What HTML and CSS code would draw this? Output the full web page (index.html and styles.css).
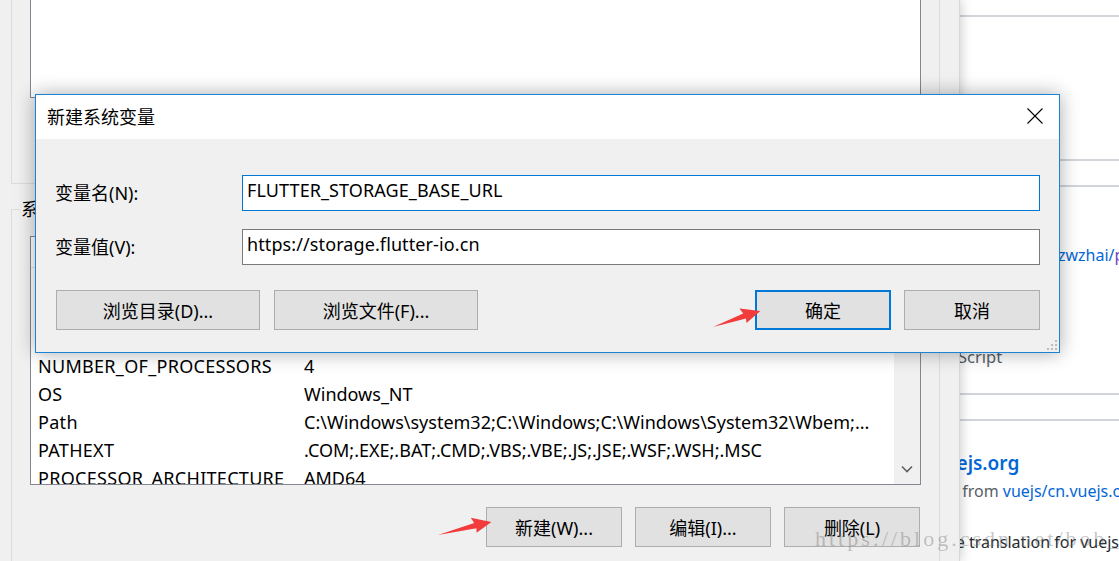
FILE: index.html
```html
<!DOCTYPE html>
<html lang="zh-CN">
<head>
    <meta charset="UTF-8">
    <title>新建系统变量</title>
    <link rel="stylesheet" href="styles.css">
</head>
<body>
    <div class="desktop">
        <!-- Fenêtre des variables d'environnement (derrière) -->
        <div class="env-window">
            <div class="group group-user">
                <div class="listbox listbox-user"></div>
            </div>

            <div class="group group-system">
                <span class="group-title">系统变量(S)</span>
                <div class="listbox listbox-system">
                    <div class="list-rows">
                        <div class="list-head"><span class="col-name">变量</span><span class="col-value">值</span></div>
                        <div class="list-row"><span class="col-name">ComSpec</span><span class="col-value">C:\Windows\system32\cmd.exe</span></div>
                        <div class="list-row"><span class="col-name">DriverData</span><span class="col-value">C:\Windows\System32\Drivers\DriverData</span></div>
                        <div class="list-row"><span class="col-name">JAVA_HOME</span><span class="col-value">C:\Program Files\Java\jdk1.8.0</span></div>
                        <div class="list-row"><span class="col-name">NUMBER_OF_PROCESSORS</span><span class="col-value">4</span></div>
                        <div class="list-row"><span class="col-name">OS</span><span class="col-value">Windows_NT</span></div>
                        <div class="list-row"><span class="col-name">Path</span><span class="col-value">C:\Windows\system32;C:\Windows;C:\Windows\System32\Wbem;...</span></div>
                        <div class="list-row"><span class="col-name">PATHEXT</span><span class="col-value">.COM;.EXE;.BAT;.CMD;.VBS;.VBE;.JS;.JSE;.WSF;.WSH;.MSC</span></div>
                        <div class="list-row"><span class="col-name">PROCESSOR_ARCHITECTURE</span><span class="col-value">AMD64</span></div>
                    </div>
                    <div class="scrollbar">
                        <svg width="12" height="8" viewBox="0 0 12 8"><path d="M1 1.5 L6 6.5 L11 1.5" fill="none" stroke="#606060" stroke-width="1.6"/></svg>
                    </div>
                </div>
                <div class="button-row">
                    <button class="btn">新建(W)...</button>
                    <button class="btn">编辑(I)...</button>
                    <button class="btn">删除(L)</button>
                </div>
            </div>
        </div>

        <!-- Page web à droite -->
        <div class="browser-page">
            <div class="page-rule first"></div>
            <div class="page-rule gap-142"></div>
            <div class="page-rule gap-24"></div>
            <div class="repo-section">
                <div class="repo-link">zwzhai/<span class="visited">p</span></div>
                <div class="repo-lang">Script</div>
            </div>
            <div class="page-rule"></div>
            <div class="page-rule gap-24"></div>
            <div class="repo-title">vuejs.org</div>
            <div class="repo-fork">Forked from <span class="link">vuejs/cn.vuejs.org</span></div>
            <div class="repo-desc">Chinese translation for vuejs.org</div>
        </div>

        <!-- Boîte de dialogue -->
        <div class="dialog">
            <div class="dialog-titlebar">
                <span class="dialog-title">新建系统变量</span>
                <svg class="close-icon" width="16" height="16" viewBox="0 0 16 16"><path d="M0.5 0.5 L15.5 15.5 M15.5 0.5 L0.5 15.5" stroke="#000" stroke-width="1.1"/></svg>
            </div>
            <div class="dialog-body">
                <div class="field">
                    <label class="field-label">变量名(N):</label>
                    <div class="field-input focused">FLUTTER_STORAGE_BASE_URL</div>
                </div>
                <div class="field">
                    <label class="field-label">变量值(V):</label>
                    <div class="field-input">https://storage.flutter-io.cn</div>
                </div>
                <div class="dialog-buttons">
                    <button class="btn wide">浏览目录(D)...</button>
                    <button class="btn wide">浏览文件(F)...</button>
                    <span class="spacer"></span>
                    <button class="btn default">确定</button>
                    <button class="btn">取消</button>
                </div>
                <svg class="grip" width="10" height="10" viewBox="0 0 10 10" fill="#bcbcbc">
                    <rect x="8" y="0" width="2" height="2"/>
                    <rect x="4" y="4" width="2" height="2"/><rect x="8" y="4" width="2" height="2"/>
                    <rect x="0" y="8" width="2" height="2"/><rect x="4" y="8" width="2" height="2"/><rect x="8" y="8" width="2" height="2"/>
                </svg>
            </div>
        </div>

        <!-- Flèches rouges d'annotation -->
        <svg class="annotations" width="1119" height="561" viewBox="0 0 1119 561">
            <path transform="translate(713 327) rotate(-18.8)" d="M0 0 L33 -3 L31 -9 L50 0 L33 7 L34 2.5 Z" fill="#f23b3b"/>
            <path transform="translate(438 535) rotate(-13.8)" d="M0 0 L38 -3 L36 -9 L55 0 L38 7 L39 2.5 Z" fill="#f23b3b"/>
        </svg>

        <div class="watermark">https://blog.csdn.net/bob_fish</div>
    </div>
</body>
</html>
```

FILE: styles.css
```css
body {
    margin: 0;
    padding: 0;
    font-family: "Noto Sans", "Noto Sans CJK SC", sans-serif;
    background-color: #ffffff;
    overflow: hidden;
}

.desktop {
    position: relative;
    display: flex;
    width: 1119px;
    height: 561px;
    overflow: hidden;
}

/* ----- fenêtre derrière ----- */
.env-window {
    position: relative;
    z-index: 1;
    flex-shrink: 0;
    display: flex;
    flex-direction: column;
    box-sizing: border-box;
    width: 959px;
    height: 561px;
    padding: 0 19px 0 11px;
    background-color: #f0f0f0;
    box-shadow: 1px 0 0 #d8d8d8, 3px 0 10px rgba(0, 0, 0, 0.18);
    font-size: 18px;
}

.group {
    box-sizing: border-box;
    border: 1px solid #dcdcdc;
    padding: 0 18px;
}

.group-user {
    height: 184px;
    border-top: none;
}

.group-system {
    flex: 1;
    margin-top: 25px;
    border-bottom: none;
}

.group-title {
    display: table;
    margin: -13px 0 0 -10px;
    padding: 0 1px;
    line-height: 24px;
    background-color: #f0f0f0;
    color: #000;
}

.listbox {
    box-sizing: border-box;
    background-color: #fff;
    border: 1px solid #828790;
}

.listbox-user {
    height: 98px;
    border-top: none;
}

.listbox-system {
    display: flex;
    height: 249px;
    margin-top: 15px;
}

.list-rows {
    flex: 1;
    min-width: 0;
    overflow: hidden;
}

.list-head {
    display: flex;
    height: 31px;
    line-height: 31px;
    border-bottom: 1px solid #e5e5e5;
    box-sizing: border-box;
}

.list-row {
    display: flex;
    height: 28px;
    line-height: 28px;
    color: #000;
}

.col-name {
    flex-shrink: 0;
    width: 266px;
    padding-left: 7px;
    white-space: nowrap;
    letter-spacing: 0.3px;
}

.col-value {
    flex: 1;
    min-width: 0;
    white-space: nowrap;
    overflow: hidden;
    text-overflow: ellipsis;
    padding-right: 10px;
}

.scrollbar {
    width: 26px;
    flex-shrink: 0;
    display: flex;
    flex-direction: column;
    justify-content: flex-end;
    align-items: center;
    padding-bottom: 11px;
    box-sizing: border-box;
    background-color: #f0f0f0;
}

.button-row {
    display: flex;
    justify-content: flex-end;
    gap: 13px;
    margin-top: 22px;
    padding-right: 1px;
}

.btn {
    box-sizing: border-box;
    width: 136px;
    height: 40px;
    padding: 0;
    border: 1px solid #adadad;
    background-color: #e1e1e1;
    font-family: inherit;
    font-size: 18px;
    color: #000;
}

.btn.wide {
    width: 204px;
}

.btn.default {
    border: 2px solid #0078d7;
}

/* ----- page web ----- */
.browser-page {
    flex: 1;
    display: flex;
    flex-direction: column;
    min-width: 0;
    overflow: hidden;
    background-color: #fff;
    color: #24292e;
    white-space: nowrap;
}

.page-rule {
    flex-shrink: 0;
    height: 2px;
    background-color: #d1d5da;
}

.page-rule.first { margin-top: 15px; }
.page-rule.gap-142 { margin-top: 142px; }
.page-rule.gap-24 { margin-top: 24px; }

.repo-section {
    height: 206px;
}

.repo-link {
    margin-top: 56px;
    padding-left: 99px;
    line-height: 24px;
    font-size: 16px;
    color: #0366d6;
}

.repo-link .visited {
    color: #6f42c1;
}

.repo-lang {
    margin-top: 78px;
    margin-left: -1px;
    line-height: 24px;
    font-size: 16.5px;
    color: #586069;
}

.repo-title {
    margin-top: 27px;
    text-indent: -25px;
    line-height: 30px;
    font-size: 19px;
    font-weight: 600;
    color: #0366d6;
}

.repo-fork {
    margin-top: 1px;
    text-indent: -53px;
    line-height: 24px;
    font-size: 16px;
    color: #586069;
}

.repo-fork .link {
    color: #0366d6;
}

.repo-desc {
    margin-top: 27px;
    text-indent: -54px;
    line-height: 24px;
    font-size: 16px;
    color: #24292e;
}

/* ----- boîte de dialogue ----- */
.dialog {
    position: absolute;
    z-index: 2;
    left: 35px;
    top: 94px;
    box-sizing: border-box;
    width: 1025px;
    height: 259px;
    border: 1px solid #1883d7;
    background-color: #f0f0f0;
    box-shadow: 0 0 18px rgba(0, 0, 0, 0.33);
    font-size: 18px;
    display: flex;
    flex-direction: column;
}

.dialog-titlebar {
    display: flex;
    align-items: center;
    justify-content: space-between;
    height: 44px;
    padding: 0 16px 0 11px;
    background-color: #fff;
    flex-shrink: 0;
}

.dialog-title {
    line-height: 24px;
    color: #000;
}

.close-icon {
    margin-top: -2px;
}

.dialog-body {
    position: relative;
    flex: 1;
    padding: 36px 19px 0 19px;
}

.field {
    display: flex;
    align-items: center;
    margin-bottom: 18px;
}

.field-label {
    width: 187px;
    flex-shrink: 0;
    color: #000;
    margin-top: -2px;
}

.field-input {
    flex: 1;
    box-sizing: border-box;
    height: 36px;
    line-height: 29px;
    padding: 0 4px;
    background-color: #fff;
    border: 1px solid #7a7a7a;
    color: #000;
    white-space: nowrap;
    letter-spacing: 0.1px;
}

.field-input.focused {
    border-color: #0078d7;
}

.dialog-buttons {
    display: flex;
    gap: 14px;
    margin-top: 25px;
    padding-left: 1px;
}

.dialog-buttons .btn.default {
    margin-right: -1px;
}

.spacer {
    flex: 1;
}

.grip {
    position: absolute;
    right: 2px;
    bottom: 2px;
}

/* ----- annotations ----- */
.annotations {
    position: absolute;
    z-index: 3;
    left: 0;
    top: 0;
    pointer-events: none;
}

.watermark {
    position: absolute;
    z-index: 4;
    left: 815px;
    top: 526px;
    font-family: "Liberation Serif", serif;
    font-size: 22px;
    letter-spacing: 3px;
    color: rgba(120, 120, 120, 0.42);
    white-space: nowrap;
    pointer-events: none;
}
```
